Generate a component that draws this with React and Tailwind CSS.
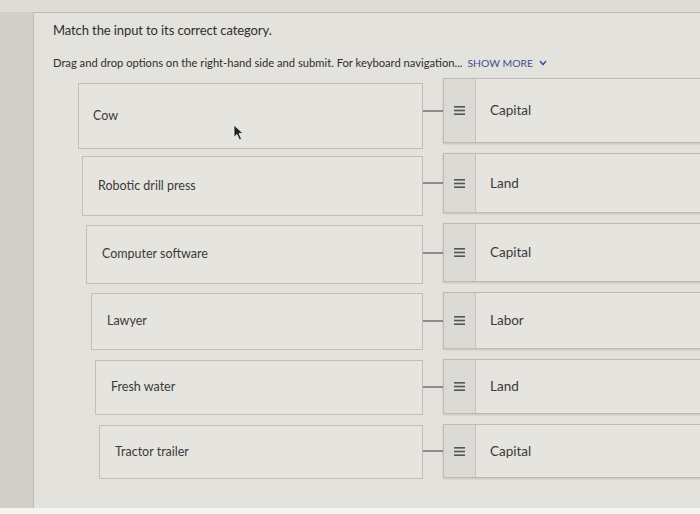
import React from "react";

const rows = [
  { left: "Cow", right: "Capital", h: "h-[65px]", lh: "h-[66px]", pt: "pt-[5px]", ml: "ml-[25px]", lpl: "pl-[14px]" },
  { left: "Robotic drill press", right: "Land", h: "h-[60px]", lh: "h-[60px]", pt: "pt-[3px]", ml: "ml-[29px]", lpl: "pl-[15px]" },
  { left: "Computer software", right: "Capital", h: "h-[59px]", lh: "h-[59px]", pt: "pt-[2px]", ml: "ml-[33px]", lpl: "pl-[15px]" },
  { left: "Lawyer", right: "Labor", h: "h-[57px]", lh: "h-[57px]", pt: "pt-[1px]", ml: "ml-[38px]", lpl: "pl-[15px]" },
  { left: "Fresh water", right: "Land", h: "h-[55px]", lh: "h-[55px]", pt: "pt-[1px]", ml: "ml-[42px]", lpl: "pl-[15px]" },
  { left: "Tractor trailer", right: "Capital", h: "h-[54px]", lh: "h-[54px]", pt: "pt-[1px]", ml: "ml-[46px]", lpl: "pl-[15px]" },
];

function Handle() {
  return (
    <svg width="11" height="9" viewBox="0 0 11 9">
      <rect x="0" y="0" width="11" height="1.6" fill="#555" />
      <rect x="0" y="3.7" width="11" height="1.6" fill="#555" />
      <rect x="0" y="7.4" width="11" height="1.6" fill="#555" />
    </svg>
  );
}

export default function App() {
  return (
    <div className="relative w-[700px] h-[514px] overflow-hidden bg-[#d3d0ca] flex flex-col font-['Lato',sans-serif] text-[#3a3a3a]">
      <div className="h-[12px] shrink-0 bg-[#dedcd6]" />
      <div className="flex flex-1 min-h-0">
        <div className="w-[33px] shrink-0 bg-[#d2cfc9]" />
        <div className="flex-1 min-w-0 bg-[#e4e2dc] border-l border-t border-[#bdbab4] pl-[19px] pt-[7px] overflow-hidden">
          <div className="text-[13px] leading-[20px] tracking-[-0.1px] text-[#2e2e2e] whitespace-nowrap">Match the input to its correct category.</div>
          <div className="mt-[15px] flex items-center text-[11.2px] leading-[16px] text-[#2e2e2e] whitespace-nowrap">
            <span>Drag and drop options on the right-hand side and submit. For keyboard navigation...</span>
            <span className="ml-[5px] text-[10.4px] text-[#3f4f94]">SHOW MORE</span>
            <svg className="ml-[6px] shrink-0" width="8" height="6" viewBox="0 0 8 6">
              <path d="M1 1 L4 4.5 L7 1" fill="none" stroke="#3f4f94" strokeWidth="1.5" />
            </svg>
          </div>
          <div className="mt-[7px] flex flex-col gap-[10px]">
            {rows.map((r, i) => (
              <div key={i} className={`flex items-center ${r.h}`}>
                <div className={`w-[370px] shrink-0 h-full flex items-start ${r.pt}`}>
                  <div className={`${r.ml} flex-1 ${r.lh} border border-[#c2bfb9] bg-[#e6e4de] flex items-center ${r.lpl} text-[12.5px]`}>
                    {r.left}
                  </div>
                </div>
                <div className="w-[20px] shrink-0 h-[2px] bg-[#8e8c88]" />
                <div className="flex shrink-0 h-full w-[300px] border border-[#bdbab4] shadow-[0_1px_2px_rgba(0,0,0,0.15)]">
                  <div className="w-[32px] shrink-0 h-full bg-[#dcdad4] border-r border-[#c6c3bd] flex items-center justify-center">
                    <Handle />
                  </div>
                  <div className="flex-1 h-full bg-[#e6e4de] flex items-center pl-[14px] text-[13.5px]">
                    {r.right}
                  </div>
                </div>
              </div>
            ))}
          </div>
        </div>
      </div>
      <div className="h-[6px] shrink-0 bg-[#f4f4f2]" />
      <svg className="absolute left-[233px] top-[124px]" width="12" height="17" viewBox="0 0 12 17">
        <path d="M1 1 L1 13 L4 10.5 L6.5 16 L8.5 15 L6 9.5 L10 9.5 Z" fill="#222" stroke="#f0f0f0" strokeWidth="0.8" />
      </svg>
    </div>
  );
}
